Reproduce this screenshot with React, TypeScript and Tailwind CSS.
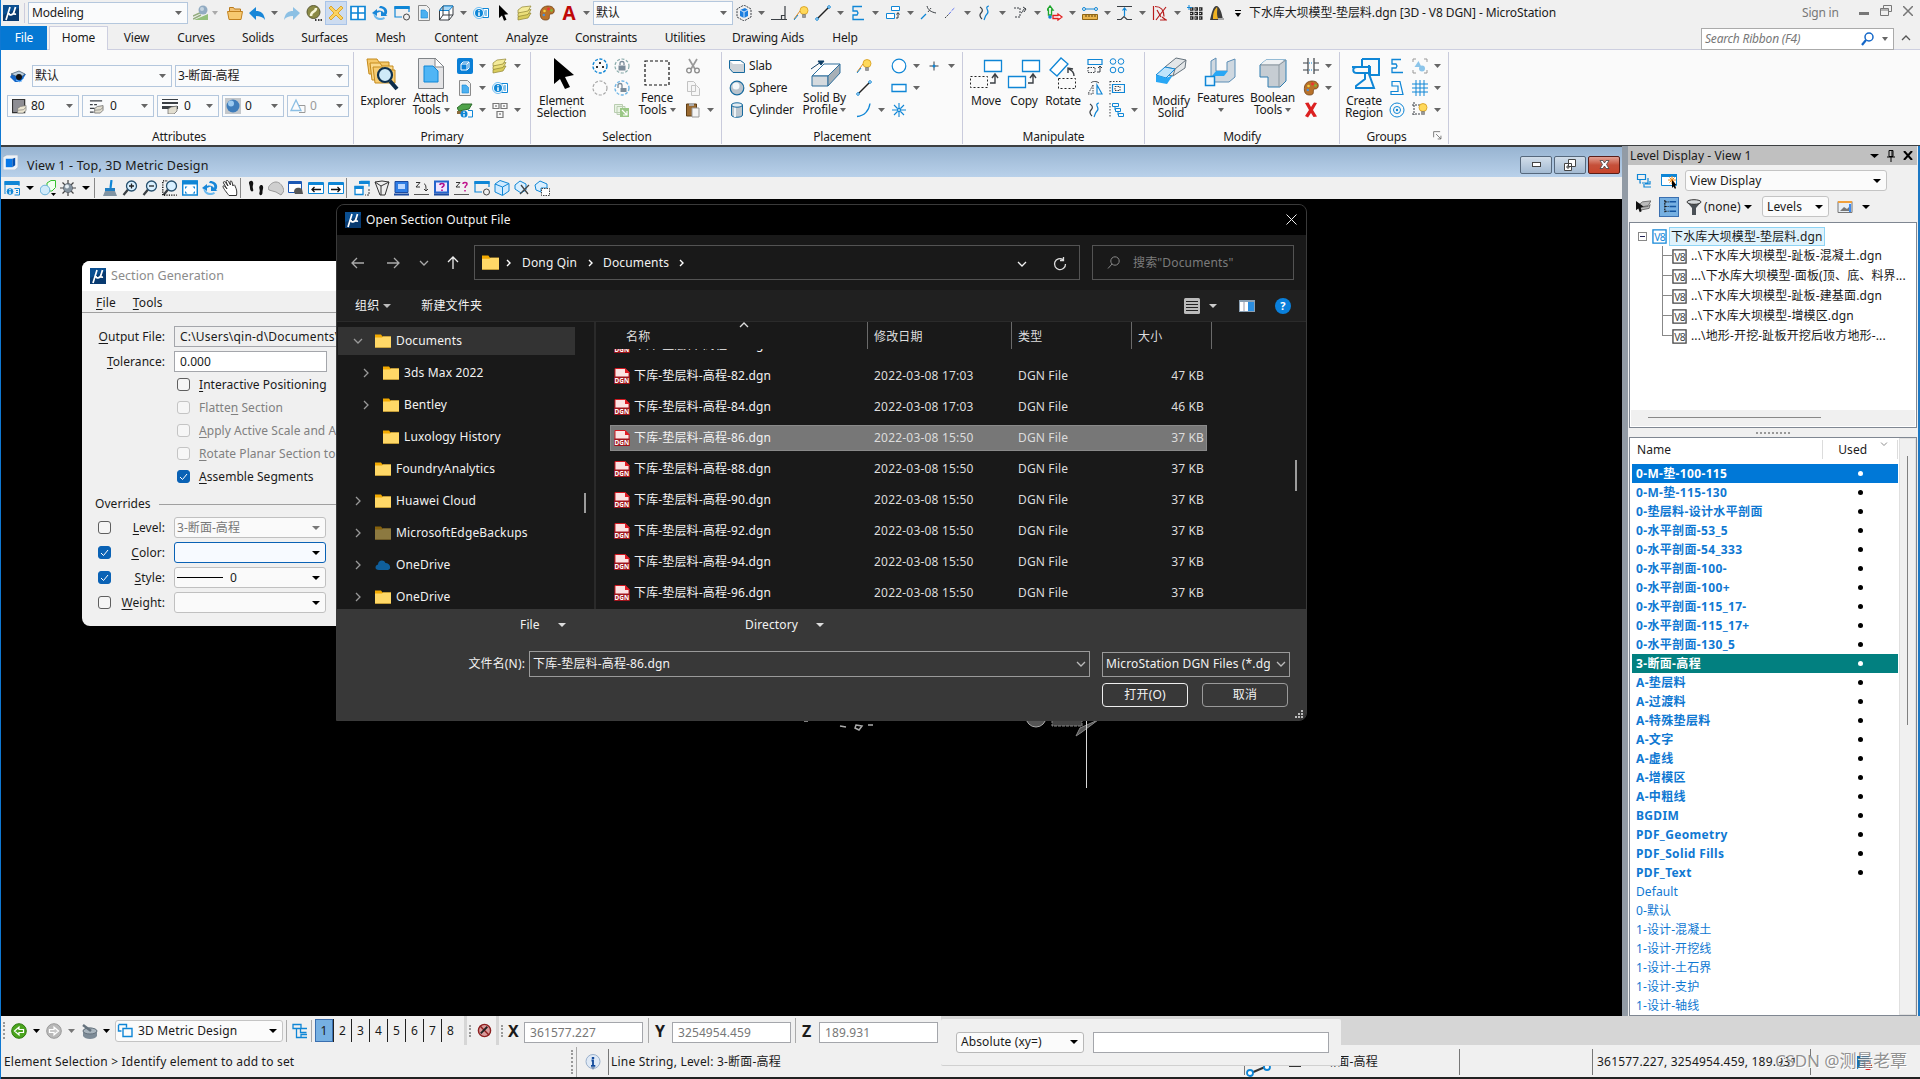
import { ReactNode } from "react";

const B = "#0f86d6";
const K = "#3a3f44";

const layers = (
  <>
    <path d="M1 12l4-3 9-1-3 5-10 2z" fill="#d9cc5c" stroke="#8f8430" strokeWidth=".7" />
    <path d="M1 8.500l4-3 9-1-3 5-10 2z" fill="#ebdf7a" stroke="#8f8430" strokeWidth=".7" />
    <path d="M1 5l4-3 9-1-3 5-10 2z" fill="#f4eb9a" stroke="#8f8430" strokeWidth=".7" />
  </>
);

const bulb = (
  <>
    <circle cx="11" cy="5.500" r="4" fill="#ffd95a" stroke="#d49a1a" strokeWidth=".8" />
    <path d="M9.500 9.500h3v3h-3z" fill="#999" stroke="#666" strokeWidth=".5" />
  </>
);

const lens = (
  <>
    <path d="M6 9.500L1.500 15" stroke={K} strokeWidth="2.200" />
    <circle cx="9.500" cy="6" r="5" fill="#d9f0ff" stroke="#27506e" strokeWidth="1.300" />
  </>
);

const v8 = (c: string) => (
  <>
    <path d="M1 1h14v14H1z" fill="#fff" stroke={c} strokeWidth="1.400" />
    <text x="8" y="12.500" fontSize="11" textAnchor="middle" fill={c} letterSpacing="-.8">V8</text>
  </>
);

const icons: Record<string, ReactNode> = {
  layers,
  // the file dialog's flat folder, the toolbar has a shaded open one
  folder: (
    <>
      <path d="M0 1.500h6l1.500 2H16v11H0z" fill="#f2a900" />
      <path d="M0 4.500h7l1-1h8v11H0z" fill="#ffd867" />
    </>
  ),
  openFolder: (
    <>
      <path d="M2.500 2.500h4l1 1.500h6v5h-11z" fill="#f3c272" stroke="#b97a1d" />
      <path d="M.5 6.500h15l-1.500 8H2z" fill="#f7c970" stroke="#c1811f" />
    </>
  ),
  infoCard: (
    <>
      <path d="M8 3.500h7.500v9H8" fill="#fff" stroke={B} />
      <path d="M12 6h2M12 8h2M12 10h2" stroke={B} />
      <circle cx="6" cy="8" r="5.500" fill="#fff" stroke="#6dbcf0" />
      <circle cx="6" cy="8" r="4" fill={B} />
      <path d="M6 5v1.300M6 7.200V11" stroke="#fff" strokeWidth="1.500" />
    </>
  ),
  palette: (
    <>
      <path d="M9 1c5 0 7 3 6 6s-4 1-4.500 3 1 5-4 5-5.500-4-5-8 4-6 7.500-6z" fill="#b9722a" stroke="#6e3d12" strokeWidth=".8" />
      <circle cx="9.500" cy="4" r="1.400" fill="#e33" />
      <circle cx="5.500" cy="6" r="1.300" fill="#f4d03f" />
      <circle cx="4.800" cy="10" r="1.300" fill="#4a90d9" />
      <circle cx="12.500" cy="5.500" r="1.200" fill="#7fba3c" />
    </>
  ),
  cursor: <path d="M4 0v13l3-2.600 2 5.300 2.500-1-2.200-5 4-.4z" fill="#000" />,
  page: (
    <>
      <path d="M2.500.5h8l3 3v12h-11z" fill="#f1f1f1" stroke="#8a8a8a" />
      <path d="M5 5h4l2.500 2.500V13H5z" fill="#4cb0f0" stroke={B} strokeWidth=".6" />
    </>
  ),
  wave: (
    <>
      <path d="M3 2c3 2 3 4 1 6s-1 4 1 6" stroke={K} strokeWidth="1.200" />
      <path d="M12 1c-1 0-3 1-2 3s2 3 0 5-2 4-3 6" stroke={B} strokeWidth="1.200" />
    </>
  ),
  chain: <path d="M12 1.500H3V6h4l1 2-1 2H3v4.500h11" stroke={B} strokeWidth="1.300" />,
  rectCopy: (
    <>
      <path d="M6.500 1.500h8v4h-8zM1.500 8.500h8v5h-8z" fill="#fff" stroke={B} />
      <path d="M11 13h2V8m-1.500 1.500L13 7.500l1.500 2" stroke={K} />
    </>
  ),
  stack: <path d="M1.500 1.500h8v5h-8zM4 7v3h1M12 5v5H6M8 11v3h7M14 8v3H9" stroke={B} strokeWidth="1.200" />,
  cube: (
    <>
      <path d="M6 .5l9 3v7.500L8.500 15.500 1 12V4z" fill="#cfeaff" stroke={B} />
      <path d="M1 4l7.500 3L15 3.500M8.500 7v8" stroke={B} />
    </>
  ),
  logo: (
    <>
      <path d="M0 0h16v16H0z" fill="#0b4f91" />
      <path d="M0 10L16 3v13H0z" fill="#083a70" />
      <path d="M3 15L7 2M6 8c0 3 4 2.500 5-1l1.500-5M11 7c-.5 2 0 2.500 2 2" stroke="#fff" strokeWidth="1.700" />
    </>
  ),
  workspace: (
    <>
      <path d="M1 15L15 9v6z" fill="#94c07c" />
      <path d="M0 11l11-5M0 14l8-4" stroke="#93ac7f" strokeWidth="1.400" />
      <circle cx="10" cy="5" r="4.500" fill="#92abc2" />
      <circle cx="9" cy="4" r="2" fill="#c5d4e0" />
    </>
  ),
  undo: <path d="M0 8l7-6v4c5 0 8 2 9 9-2-3-5-4-9-4v4z" fill="#1786d8" />,
  redo: <path d="M16 8L9 2v4c-5 0-8 2-9 9 2-3 5-4 9-4v4z" fill="#8cc0e4" />,
  compress: (
    <>
      <circle cx="7.500" cy="7" r="6.500" fill="#8b8a45" stroke="#5c5b34" />
      <path d="M5 11c0-6 5-3 5-8" stroke="#f7f6d8" strokeWidth="2.500" />
      <path d="M9 15h1.500M12 15h1.500M14.500 15H16" stroke="#000" strokeWidth="1.400" />
    </>
  ),
  xmark: <path d="M3 1l5 5 5-5 2 2-5 5 5 5-2 2-5-5-5 5-2-2 5-5-5-5z" fill="#fbd260" stroke="#d9a020" strokeWidth=".9" />,
  grid4: <path d="M1 1.500h14v13H1zM8 1v14M1 8h14" fill="#fff" stroke={B} strokeWidth="1.700" />,
  rotate: (
    <>
      <path d="M0 8l5-4v2c3-1 6 0 7 2 1-3-1-5-5-5l1-2c6 0 9 5 6 9l1.500 1H9V6l1.500 1.500C9 6 7 7 5 8v3z" fill="#1786d8" />
      <path d="M3 9c1 4 6 5 9 3l1 1.500C9 16.500 2 15 1.500 9z" fill="#6bb9ee" />
    </>
  ),
  viewCircle: (
    <>
      <path d="M15 7V2H1v10h7" stroke={B} strokeWidth="1.200" />
      <path d="M.4 1h15.200v3H.4z" fill={B} />
      <circle cx="12.500" cy="12" r="3" stroke="#444" />
    </>
  ),
  cubeDark: (
    <>
      <path d="M1.500 5.500L5 1h10v9l-4 5H1.500z" fill="#fff" stroke={K} />
      <path d="M1.500 5.500L5 1h10l-4 4.500z" fill="#aad9f7" stroke={B} />
      <path d="M11 5.500V15M5 1v9h10M5 10l-3.500 5" stroke={K} />
    </>
  ),
  letterA: <text x="8" y="15" fontSize="19" fontWeight="700" textAnchor="middle" fill="#c00808">A</text>,
  accuDraw: (
    <>
      <path d="M8 0l7 4v8l-7 4-7-4V4z" stroke={K} strokeDasharray="2 1" />
      <path d="M4 5l5-2 3 2v6l-4 2-4-2z" fill="#1c7fe0" />
      <path d="M4 5l4 2 4-2M8 7v6" stroke="#fff" strokeWidth=".8" />
    </>
  ),
  perp: <path d="M0 14.500h16M14 1v13M10.500 14v-3.500H14" stroke={K} strokeWidth="1.200" />,
  bulbArrow: <><path d="M1 14L7 6" stroke="#e08a1e" /><path d="M1 15l4-5" stroke={B} />{bulb}</>,
  line: (
    <>
      <path d="M2 14L14 2" stroke="#222" strokeWidth="1.400" />
      <circle cx="2" cy="14" r="1.300" fill="#fff" stroke={B} />
      <circle cx="14" cy="2" r="1.300" fill="#fff" stroke={B} />
    </>
  ),
  trim: (
    <>
      <path d="M7 1c1 4 4 6 9 7" stroke={K} />
      <path d="M6 9L1 14" stroke={B} strokeWidth="1.300" />
      <path d="M8 7l3-4" stroke={K} strokeDasharray="2 1.500" />
    </>
  ),
  extend: <><path d="M3 13l4-4" stroke={K} strokeDasharray="2 1" /><path d="M7 9l6-7" stroke="#5a6ff0" strokeDasharray="3 1.500" /></>,
  fillet: (
    <>
      <path d="M2 3h6v9H2" stroke={K} strokeDasharray="2 1" />
      <path d="M9 8c3-1 1-5 5-4M11 2l3 2-2 3" stroke={K} />
    </>
  ),
  acs: (
    <>
      <path d="M3 1l3 4H4.500v5h-3V5H0z" fill="#fff" stroke="#1fa62d" strokeWidth="1.400" />
      <path d="M15 12l-4-3v1.500H6v3h5V15z" fill="#fff" stroke="#e02020" strokeWidth="1.300" />
      <circle cx="3" cy="12" r="1.800" fill={B} />
    </>
  ),
  measure: (
    <>
      <circle cx="2" cy="4" r="1.500" stroke={B} /><circle cx="14" cy="4" r="1.500" stroke={B} />
      <path d="M3.500 4h9" stroke={B} />
      <path d="M.5 9.500h15v5H.5z" fill="#e9b44d" stroke="#8d6516" />
      <path d="M4 10v2M7 10v2M10 10v2M13 10v2" stroke="#5d4210" />
    </>
  ),
  dim: (
    <>
      <path d="M0 1.500h15M0 14.500h4l3-3 3 3h5" stroke={K} strokeWidth="1.200" />
      <path d="M7.500 11V3M5.500 5.500l2-2.500 2 2.500" stroke={B} strokeWidth="1.200" />
    </>
  ),
  angle: <path d="M1.500 1v14M4 15L14 2M3 1.500c6 0 9 4 9 10M5 5l4 7M8 15h7M10 12l4 3" stroke="#b81c1c" strokeWidth="1.200" />,
  dots: (
    <>
      <path d="M3 4h13M3 8.500h13M3 13h13" stroke="#222" strokeWidth="3.400" strokeDasharray="3.500 1" />
      <path d="M3.500 4h12M3.500 8.500h12M3.500 13h12" stroke="#ddd" strokeWidth="1" strokeDasharray="1.500 3" />
      <path d="M2 0v5M0 2.500h5" stroke={B} />
    </>
  ),
  bell: (
    <>
      <path d="M1 15C3 7 4 2 7 1s6 6 7 14z" fill="#3d3d3d" />
      <path d="M4 14c0-6 1-9 4-12 1 3-1 5 1 12z" fill="#f0b323" />
      <path d="M9 14h6" stroke="#aaa" strokeWidth="2" />
    </>
  ),
  template: (
    <>
      <path d="M0 9l2-3 14 0-5 8-6 0z" fill="#1667c8" />
      <path d="M1 6l8-3 6 3-5 4z" fill="#b9cddd" stroke="#36526a" strokeWidth=".7" />
      <circle cx="9" cy="9" r="3" fill="#111" />
      <path d="M6 12l4 2 4-4" stroke="#7cc2ff" />
    </>
  ),
  swatch: (
    <>
      <path d="M.5.5h13v14H.5z" fill="#8d8d93" stroke="#333" strokeWidth="1.300" />
      <path d="M6 10l3-2 6-1v5l-3 3H6z" fill="#ece6d2" stroke="#777" strokeWidth=".7" />
      <path d="M6 12l6-.5 3-2.500" stroke="#777" strokeWidth=".7" />
    </>
  ),
  lstyle: (
    <>
      <path d="M1 2h13M1 6h3M5.500 6h3M1 10h5M1 14h4" stroke={K} strokeWidth="1.200" />
      <path d="M6 10l3-2 6-1v5l-3 3H6z" fill="#e2ded0" stroke="#555" strokeWidth=".7" />
      <path d="M6 12l6-.5 3-2.500" stroke="#777" strokeWidth=".7" />
    </>
  ),
  lweight: (
    <>
      <path d="M0 1.500h16" stroke={K} /><path d="M0 5h16" stroke={K} strokeWidth="2" /><path d="M0 9.500h16" stroke={K} strokeWidth="3" />
      <path d="M6 11l3-2 6-1v5l-3 3H6z" fill="#e2ded0" stroke="#666" strokeWidth=".7" />
    </>
  ),
  globe: <><path d="M0 0h16v16H0z" fill="#c3c7cb" /><circle cx="8" cy="8" r="6.500" fill="#3f7dbb" /><circle cx="6" cy="5.500" r="3" fill="#9ccaf0" /></>,
  priority: <><path d="M1 12.500L6 2l5 10.500z" stroke="#8cbfe4" strokeWidth="1.300" /><path d="M9 7.500h6v7H9" stroke="#9a9a9a" /></>,
  models: <><rect width="16" height="16" rx="2" fill="#0a7fd6" /><path d="M4 6l2-2h6v6l-2 2H4zM4 6h6v6M10 6l2-2" stroke="#fff" /></>,
  refLayers: <><path d="M0 6l5-4h10l-3 5-10 2z" fill="#4fa34a" stroke="#2c6b2a" /><path d="M0 9h6v3H0z" fill="#8b6b3d" /><circle cx="7" cy="12" r="3.500" fill={B} /><path d="M11 8.500h4.500v6.500H11M7 10v1M7 12v2.500" stroke={B} /><path d="M7 9.500V11M7 12v2.500" stroke="#fff" strokeWidth="1.300" /></>,
  keyins: <path d="M1 1.500h6v5H1zM9 1.500h6v5H9zM5 9.500h6v6H5zM4 3v2M12 3v2M8 11v2" stroke="#777" strokeWidth="1.200" />,
  selAll: <><circle cx="8" cy="8" r="7" stroke={B} strokeWidth="1.400" strokeDasharray="3 1.600" /><path d="M7 4h2v2H7zM4 8h2v2H4zM10 8h2v2h-2z" fill="#333" /></>,
  selLock: <><circle cx="8" cy="8" r="7" stroke="#8aa" strokeWidth="1.200" strokeDasharray="3 1.600" /><path d="M4.500 7.500h7v5h-7z" fill="#7a8b99" /><path d="M6 7V5c0-2 4-2 4 0v2" stroke="#7a8b99" strokeWidth="1.300" /></>,
  selNone: <circle cx="8" cy="8" r="7" stroke="#a8a8a8" strokeWidth="1.200" strokeDasharray="3 1.600" />,
  selUnlock: <><circle cx="8" cy="8" r="7" stroke="#6fb6e6" strokeWidth="1.400" strokeDasharray="3 1.600" /><path d="M6.500 8h6v4h-6z" fill="#7a8b99" /><path d="M4 8V5c0-2 4-2 4 0v3" stroke="#7a8b99" strokeWidth="1.300" /></>,
  greenCopy: <><path d="M.5 2.500h8v8h-8zM3 4.500h8v8H3z" fill="#e9f3e4" stroke="#b9cdb0" /><path d="M6 6h9v9H6z" fill="#9ac785" /><path d="M8 8l5 5M13 9v4H9" stroke="#fff" strokeWidth="1.200" /></>,
  cut: <><path d="M4 1l6 10M12 1L6 11" stroke="#9a9a9a" strokeWidth="1.700" /><circle cx="4" cy="12.500" r="2.300" stroke="#8a8a8a" strokeWidth="1.300" /><circle cx="12" cy="12.500" r="2.300" stroke="#8a8a8a" strokeWidth="1.300" /></>,
  copy: <path d="M2.500 1.500h6l2 2v8h-8zM6.500 5.500h5l3 3v7h-8z" fill="#f6f6f6" stroke="#c2c2c2" />,
  paste: <><path d="M1.500 2h10v12h-10z" fill="#9a6a31" stroke="#5d3c14" /><path d="M4 1h5v3H4z" fill="#aaa" /><path d="M7 6h7v9H7z" fill="#f4f4f4" stroke="#999" /></>,
  slab: <><path d="M.5 2.500h11l4 3v9H4l-3.500-4z" fill="#cdd3d8" stroke="#176a9e" /><path d="M1 3h10l4 3H4z" fill="#fff" /></>,
  sphere: <><circle cx="8" cy="8" r="6.800" fill="#b9c3cc" stroke="#176a9e" strokeWidth="1.200" /><circle cx="7" cy="6" r="3.500" fill="#f3f7fa" /></>,
  cylinder: <><path d="M2.500 3v10c0 3 11 3 11 0V3z" fill="#bcc6ce" stroke="#176a9e" /><path d="M6 5v10" stroke="#eef3f6" strokeWidth="2" /><ellipse cx="8" cy="3" rx="5.500" ry="2.200" fill="#e4ecf1" stroke="#176a9e" /></>,
  arc: <path d="M1 14.500C8 14 13 9 14 1.500" stroke={B} strokeWidth="1.300" />,
  circle: <circle cx="8" cy="8" r="6.800" fill="#fff" stroke={B} strokeWidth="1.200" />,
  rect: <path d="M1 4.500h14v7H1z" fill="#fff" stroke={B} strokeWidth="1.300" />,
  star: <path d="M8 1v5M8 10v5M1 8h5M10 8h5M3 3l3.500 3.500M13 13L9.500 9.500M13 3L9.500 6.500M3 13l3.500-3.500M8 6l2 2-2 2-2-2z" stroke={B} strokeWidth="1.100" />,
  plus: <><path d="M8 3.500v9M3.500 8h9" stroke={K} /><circle cx="8" cy="8" r="1.500" fill={B} /></>,
  stretch: <><path d="M1 1.500h14v5H1z" stroke={B} strokeWidth="1.200" /><path d="M1 9.500h7v5H1z" stroke={K} strokeDasharray="1.500 1" /><path d="M10 14h3V8M11 10l2-2 2 2" stroke={K} /></>,
  array: <><circle cx="4" cy="3.500" r="2.800" stroke={B} /><circle cx="12" cy="3.500" r="2.800" stroke={B} /><circle cx="4" cy="12" r="2.800" stroke={B} /><circle cx="12" cy="12" r="2.800" stroke={B} /></>,
  mirror: <><path d="M6 5v9H1z" stroke={K} strokeDasharray="1.500 1" /><path d="M10 5v9h5z" stroke={B} strokeWidth="1.200" /><path d="M4 3c1-2 6-2 8 0" stroke={K} /></>,
  scale: <><path d="M1 1v14M1 1.500h12" stroke={K} strokeDasharray="1.500 1.500" /><path d="M3.500 4.500h12v8h-12z" stroke={B} strokeWidth="1.200" /><path d="M6 6.500h5v4H6z" stroke={K} strokeDasharray="1.500 1" /></>,
  align: <><path d="M1 1v14" stroke={K} strokeDasharray="1.500 1.500" /><path d="M3.500 1.500h6v3h-6zM6.500 6.500h5v3h-5zM9.500 11.500h5v3h-5zM6 5v3M9 10v3" stroke={B} /></>,
  hashBlack: <><path d="M5 0v16M11 0v16M0 5h5M11 5h5M0 12h5M11 12h5" stroke={K} strokeWidth="1.200" /><path d="M6 5h4M6 12h4" stroke={B} strokeDasharray="1 1" /></>,
  redX: <path d="M2 1l3.500-.5L8 5l3-4.500L14 1l-4 7 4 6.500-3.500.5L8 11l-3 4.500L2 14l4-6z" fill="#dc2020" />,
  chain2: <path d="M3 1.500h8l3 13H2v-3h7V6H3z" stroke={B} strokeWidth="1.200" />,
  target: <><circle cx="8" cy="8" r="7" stroke={B} /><circle cx="8" cy="8" r="3.500" stroke={B} /><circle cx="8" cy="8" r="1.200" fill={B} /></>,
  pattern: <><path d="M1 4V1h3M12 1h3v3M15 12v3h-3M4 15H1v-3" stroke="#999" /><path d="M2.500 9l4-6 3 6z" fill="#8cc5ea" /><circle cx="10" cy="10.500" r="3" fill="#8cc5ea" /></>,
  hash: <path d="M4 0v16M8 0v16M12 0v16M0 4h16M0 8h16M0 12h16" stroke={B} />,
  bulbHash: <><path d="M2 0v13M0 3h10M0 12h8" stroke={K} strokeDasharray="2 1" />{bulb}</>,
  launcher: <path d="M2 9V2h8M5 5l6 6M11 7v4H7" stroke="#666" />,
  viewCube: <><path d="M0 2l4-2h12v13l-3 3H0z" fill="#eef3f8" stroke="#9ab" strokeWidth=".6" /><path d="M3 4h7v9H3z" fill="#0878e8" /><path d="M10 4l3-1v8l-3 2z" fill="#034fb0" /></>,
  attrs: <><path d="M1 14V1.500h14V6" stroke={B} /><path d="M.5 1h15v4H.5z" fill={B} /><circle cx="6" cy="11.500" r="3.800" fill={B} stroke="#fff" strokeWidth=".8" /><path d="M6 9v1.300M6 11.200v2.800" stroke="#fff" strokeWidth="1.300" /><path d="M10.500 8.500h5v6.500h-5M12 10.500h2M12 12.500h2" stroke={B} /></>,
  style: <><path d="M7 3l4-2.500h4.500v7L12 11H7z" fill="#f1fff0" stroke="#35c02e" /><circle cx="5" cy="10" r="4.800" fill="#d0eafa" stroke="#6cb2da" /><path d="M11 13h5l-2.500 3z" fill="#000" /></>,
  sun: <><path d="M8 0v16M0 8h16M2.500 2.500l11 11M13.500 2.500l-11 11" stroke="#444" strokeWidth="1.200" /><circle cx="8" cy="8" r="4.600" fill="#84929e" stroke="#4b545c" strokeWidth=".6" /><circle cx="7" cy="6.500" r="2" fill="#e6eef4" /></>,
  brush: <><path d="M9.500 0l-1 8" stroke={B} strokeWidth="2.200" /><path d="M3 8h10v3H3z" fill="#1f7fc4" /><path d="M3 11h10l2 5H1z" fill="#8194a3" /></>,
  zoomIn: <>{lens}<path d="M7 6h5M9.500 3.500v5" stroke="#222" strokeWidth="1.300" /></>,
  zoomOut: <>{lens}<path d="M7 6h5" stroke="#222" strokeWidth="1.300" /></>,
  zoomWin: <>{lens}<path d="M1 .8h5M.8 2v13.200h14" stroke="#000" strokeWidth="1.300" strokeDasharray="1.200 1.200" /></>,
  fit: <><path d="M.7 1h14.600v14H.7z" fill="#fff" stroke={B} strokeWidth="1.500" /><path d="M.5.5h15v4H.5z" fill={B} /><path d="M3 6.500h2.500L3 9zM13 6.500h-2.500L13 9zM3 13.500h2.500L3 11zM13 13.500h-2.500L13 11z" fill={B} /></>,
  hand: <path d="M7 15.500C5 13 1 8 1 6.500S3 6 5 9L1.500 3c-.5-1.500 1-2 2-.5L6 6 4 1.500C4 0 6 .2 6.500 1.500L8.500 5 8 2c0-1.500 1.800-1.300 2 0l1 4c.5-2 2-1 2 0 2 4 2 6 1.500 9.500z" fill="#fff" stroke="#333" />,
  feet: <><path d="M1.500 1.500C4-.5 6 2 5 5s1 5 0 6-3 0-3-3-2-5-.5-6.500z" fill="#111" /><path d="M14.500 5.500c-2-1.500-4 1-3 3.500s-1 4 0 5.500 3 .5 3-2 1.500-5.500 0-7z" fill="#111" /></>,
  fly: <path d="M0 8c2-4 5-6 8-6 4 0 7 4 8 9l-3 4-5-3-7-2z" fill="#cfcfcf" stroke="#999" />,
  navi: <><path d="M.5 1.500h13v11H.5z" fill="#fff" stroke="#1b58b5" /><path d="M1 1h12v3H1z" fill="#1b58b5" /><path d="M6 12c0-5 5-5 8-3l1 5H7z" fill="#555" /></>,
  prev: <><path d="M.5 2.500h15v11H.5z" fill="#fff" stroke={B} /><path d="M1 2h14v3H1z" fill={B} /><path d="M13 9.500H4M6.500 7L4 9.500 6.500 12" stroke="#111" strokeWidth="1.300" /></>,
  next: <><path d="M.5 2.500h15v11H.5z" fill="#fff" stroke={B} /><path d="M1 2h14v3H1z" fill={B} /><path d="M3 9.500h9M9.500 7L12 9.500 9.500 12" stroke="#111" strokeWidth="1.300" /></>,
  copyView: <><path d="M6.500 1.500h8.500v5M1 6.500h8v8H1z" fill="#fff" stroke={B} strokeWidth="1.300" /><path d="M5 1h10.500v3H5zM.5 6h9v3h-9z" fill={B} /><path d="M15 9v6h-4" stroke={K} strokeDasharray="2 1" /></>,
  camera: <><path d="M1 2l7-1 7 1-4 13H6z" fill="#eee" stroke="#333" /><path d="M1 2l6 4 8-4M7 6v9" stroke="#333" /></>,
  monitor: <><path d="M1 1.500h13v11H1z" fill="#2f7de4" stroke="#1a4aa0" /><path d="M4 4h7v5H4z" fill="#bcd8ff" /><path d="M0 14.500h15" stroke="#1a4aa0" strokeWidth="2" /></>,
  monitorQ: <><path d="M1 1.500h13v11H1z" fill="#efe4ff" stroke="#2464cc" strokeWidth="2" /><path d="M6 5c0-2 4-2 4 0S8 6 8 8M8 9.500v1.500" stroke="#b0108c" strokeWidth="1.600" /><path d="M0 14.500h15" stroke="#1a4aa0" strokeWidth="2" /></>,
  zDown: <><path d="M2 2.500h4L2 7h4M10 4c2 0 2 3 2 7M10 9l2 2 2-2" stroke="#333" /><path d="M0 14.500h15" stroke="#555" /></>,
  zQ: <><path d="M2 2.500h4L2 7h4" stroke="#333" /><path d="M9 4c0-2 4-2 4 0s-2 1-2 4M11 10v1.500" stroke="#c0148c" strokeWidth="1.500" /><path d="M0 14.500h15" stroke="#555" /></>,
  clip: <><path d="M1 5l5-4 6 3v6l-5 3-6-4z" fill="#d9efff" stroke={B} /><path d="M6 14l9-9M7 5l7 9" stroke="#444" strokeWidth="1.300" /></>,
  clipMask: <><path d="M1 5l5-4 7 3v4H7v4l-5-2z" fill="#d9efff" stroke={B} /><path d="M7.500 8.500h8v7h-8z" fill="#fff" stroke="#444" strokeDasharray="1.500 1" /></>,
  viewStar: <><path d="M.5 1.500h15v11H.5z" fill="#fff" stroke={B} /><path d="M0 1h16v3H0z" fill={B} /><path d="M11 3v8M7 7h8M8.500 4.500l5 5M13.500 4.500l-5 5" stroke="#f08a18" /><path d="M11 7v8l1.500-1.500L14 16l1-1-1-3h1.500z" fill="#000" /></>,
  grayLayers: <><path d="M3 6l4-3 9-1-3 5-9 2zM3 9l10-1 2-2-1 4-10 2z" fill="#bbb" stroke="#444" strokeWidth=".7" /><path d="M0 2l8 6-3 1 1 4-2 1-1.500-4L0 12z" fill="#111" /></>,
  treeIcon: <><path d="M3 1v13M3 3h4M3 8h4M3 13h4" stroke="#111" strokeWidth="1.200" strokeDasharray="2 1" /><path d="M8 3h7M8 8h7M8 13h7" stroke="#1455a0" strokeWidth="1.700" /></>,
  funnel: <><path d="M1 3l5 6v7h4V9l5-6z" fill="#4a5056" /><ellipse cx="8" cy="3" rx="7" ry="2.300" fill="#d5d9dc" stroke="#333" /></>,
  picture: <><path d="M1 2.500h14v11H1z" fill="#e8eef4" stroke="#777" /><path d="M1 2h14v2H1z" fill="#f0a03c" /><path d="M3 12l4-4 3 2 4-4v6z" fill="#777" /><path d="M12 5h2v8h-2z" fill="#3b8af0" /></>,
  v8blue: v8("#1487d8"),
  v8dark: v8("#444"),
  dgn: (
    <>
      <path d="M1 .5h10l4 4V16H1z" fill="#fbe3e3" stroke="#d01820" />
      <path d="M11 0v5h5z" fill="#e01b24" />
      <path d="M.5 8.500h15V16H.5z" fill="#a0141c" />
      <text x="8" y="14.800" fontSize="6.400" fontWeight="700" textAnchor="middle" fill="#fff">DGN</text>
    </>
  ),
  cloud: <path d="M4 13c-5 0-4-5-1-5.500C3 3 9 2 10.500 6 15 5.500 17 12 13 13z" fill="#0f5f9c" />,
  backGreen: <><circle cx="8" cy="8" r="7.300" fill="#4ba51e" stroke="#2d7a0d" /><path d="M3.500 8L8 4v2.500h4.500v3H8V12z" fill="#4ba51e" stroke="#fff" strokeWidth="1.200" /></>,
  fwdGray: <><circle cx="8" cy="8" r="7.300" fill="#b9b9b9" stroke="#999" /><path d="M12.500 8L8 4v2.500H3.500v3H8V12z" fill="#c8c8c8" stroke="#fff" strokeWidth="1.200" /></>,
  disk: <><path d="M1 7c3-4 12-3 14 1v5c-2 4-12 4-14 0z" fill="#7d8b97" /><ellipse cx="8" cy="8" rx="7" ry="3" fill="#a8b4bd" stroke="#66737e" /><path d="M1 2l8 6" stroke="#66737e" strokeWidth="2.500" /></>,
  views: <path d="M1.500 1.500h8v3M1.500 2v6h3M6 5.500h9v8H6z" stroke={B} strokeWidth="1.400" />,
  cascade: <path d="M1 1.500h8v4H1zM4.500 6v8.500h4M15 5.500H8.500v4h6M15 11.500H9v3h6" stroke={B} strokeWidth="1.300" />,
  noSnap: <><circle cx="8" cy="8" r="6.500" fill="#d99b9b" stroke="#8d1f1f" strokeWidth="1.500" /><path d="M3 3l10 10" stroke="#8d1f1f" strokeWidth="1.500" /><path d="M4 11l7-7" stroke="#222" strokeWidth="2" /></>,
  info: <><circle cx="8" cy="7.500" r="7" fill="#dfe9f5" stroke="#9ab0cc" /><path d="M6 13h4l-2 3z" fill="#7d93b4" /><path d="M8 3v2" stroke="#124a9c" strokeWidth="2.400" /><path d="M6.500 6.500H8v5M6 11.800h4.300" stroke="#124a9c" strokeWidth="1.800" /></>,
  book: <><path d="M1 2h12v13H1z" fill="#1471b8" /><path d="M4 2v13" stroke="#0c4c80" /><circle cx="12" cy="12" r="3.500" fill="#fff" stroke="#e02020" strokeWidth="1.300" /><path d="M9.700 9.700l4.600 4.600" stroke="#e02020" /></>,
};

function Icon({ n, s = 16, className = "" }: { n: string; s?: number; className?: string }) {
  return (
    <svg width={s} height={s} viewBox="0 0 16 16" fill="none" className={`shrink-0 ${className}`}>
      {icons[n]}
    </svg>
  );
}

function Tri({ className = "text-[#666]", w = 7 }: { className?: string; w?: number }) {
  return (
    <svg width={w} height={4} viewBox="0 0 8 4" preserveAspectRatio="none" className={`shrink-0 ${className}`}>
      <path d="M0 0h8L4 4z" fill="currentColor" />
    </svg>
  );
}

function Chev({ d = "M1 3l4 4 4-4", className = "" }: { d?: string; className?: string }) {
  return (
    <svg width={10} height={10} viewBox="0 0 10 10" fill="none" className={`shrink-0 ${className}`}>
      <path d={d} stroke="currentColor" strokeWidth="1.300" />
    </svg>
  );
}

// "v" is the drop-down arrow, every other name is an icon
function Tools({ items }: { items: string[] }) {
  return (
    <>
      {items.map((n, i) =>
        n === "v" ? (
          <span key={i} className="flex w-[13px] shrink-0 justify-center"><Tri /></span>
        ) : (
          <span key={i} className="flex w-[22px] shrink-0 justify-center"><Icon n={n} /></span>
        )
      )}
    </>
  );
}

function Rows({ rows, className = "" }: { rows: string[][]; className?: string }) {
  return (
    <div className={`flex shrink-0 flex-col pt-[5px] ${className}`}>
      {rows.map((r, i) => <div key={i} className="flex h-[22px] items-center"><Tools items={r} /></div>)}
    </div>
  );
}

function Combo({ children, className = "" }: { children?: ReactNode; className?: string }) {
  return (
    <div className={`flex shrink-0 items-center justify-between border border-[#b4c7dd] bg-[#fafbfc] pr-[5px] ${className}`}>
      <span className="flex items-center gap-[4px] whitespace-nowrap">{children}</span>
      <Tri />
    </div>
  );
}

function Group({ label, className, children }: { label: string; className: string; children: ReactNode }) {
  return (
    <div className={`relative mt-[2px] flex h-[92px] shrink-0 flex-col border-r border-[#c9cbdc] ${className}`}>
      <div className="-mt-[2px] flex h-[79px] shrink-0">{children}</div>
      <div className="text-center leading-[15px]">{label}</div>
    </div>
  );
}

function Big({ art, lines, drop, className }: { art: ReactNode; lines: string[]; drop?: boolean; className: string }) {
  return (
    <div className={`flex shrink-0 flex-col items-center leading-[12px] whitespace-nowrap ${className}`}>
      <svg width={34} height={34} viewBox="0 0 34 34" fill="none" className={drop ? "mt-[7px] mb-[1px]" : "mt-[7px] mb-[4px]"}>{art}</svg>
      {lines.map((l, i) => (
        <span key={l} className="flex h-[12px] items-center gap-[3px]">{l}{drop && i === 1 ? <Tri w={6} /> : null}</span>
      ))}
      {drop && lines.length === 1 ? <span className="pt-[4px]"><Tri w={6} /></span> : null}
    </div>
  );
}

const art = {
  explorer: (
    <>
      <path d="M1 2h10l2 3h10v12H3z" fill="#f5c869" stroke="#c48a1c" />
      <path d="M4 6h10l2 3h11v14H6z" fill="#fbd98c" stroke="#c48a1c" />
      <path d="M7 10h9l2 3h11v13H9z" fill="#f7cc72" stroke="#c48a1c" />
      <path d="M24 24l7 8" stroke="#0d2c4a" strokeWidth="4" />
      <circle cx="19" cy="18" r="7" fill="#cfeaf8" stroke="#0d3050" strokeWidth="2.200" />
    </>
  ),
  attach: (
    <>
      <path d="M4.500 1.500h17l8 8v22h-25z" fill="#e4e4e6" stroke="#808488" />
      <path d="M21 1v9h9z" fill="#fff" stroke="#808488" />
      <path d="M10 9h9l5 5v11H10z" fill="#4fb5f5" stroke={B} />
    </>
  ),
  element: <path d="M9 1v26l6-5 5 10 5-2-5-10 9-2z" fill="#000" />,
  fence: <path d="M5 4h24v24H5z" stroke="#111" strokeWidth="1.200" strokeDasharray="3 2" />,
  solid: (
    <>
      <path d="M4 19L16 7h16L20 19z" fill="#fff" stroke="#2e6f9c" />
      <path d="M4 19h16v10H4z" fill="#d5dade" stroke="#2e6f9c" />
      <path d="M20 19L32 7v9L20 29z" fill="#a7b0b7" stroke="#2e6f9c" />
      <path d="M3 12L13 5M10 4h6l-3 4z" stroke="#0f3f66" fill="#0f3f66" />
    </>
  ),
  move: (
    <>
      <path d="M15.500 3.500h17v11h-17z" fill="#fff" stroke={B} strokeWidth="1.300" />
      <path d="M1.500 19.500h17v11h-17z" stroke="#222" strokeDasharray="2 2" />
      <path d="M21 26h5v-8M23 21l3-4 3 4" stroke={K} strokeWidth="1.400" />
    </>
  ),
  copy: (
    <>
      <path d="M15.500 3.500h17v11h-17zM1.500 19.500h17v11h-17z" fill="#fff" stroke={B} strokeWidth="1.300" />
      <path d="M21 26h5v-8M23 21l3-4 3 4" stroke={K} strokeWidth="1.400" />
    </>
  ),
  rotate: (
    <>
      <path d="M4 13L15 1l7 6-11 12z" fill="#fff" stroke={B} strokeWidth="1.300" />
      <path d="M12.500 21.500h17v10h-17z" stroke="#222" strokeDasharray="2 2" />
      <path d="M28 19c0-4-2-5-5-7M22 16v-5l5 1" stroke={K} strokeWidth="1.400" />
    </>
  ),
  modify: (
    <>
      <path d="M11 10L22 1l10 2-1 8-12 8-9-2z" fill="#e3e6e8" stroke="#66737d" />
      <path d="M11 10l10 2 11-9M21 12l-2 7" stroke="#66737d" />
      <path d="M2 18l9-8 10 2-9 9z" fill="#bfe4fb" stroke={B} />
      <path d="M2 18l10 3 7-3-6 9-11-2z" fill="#29a7f5" />
    </>
  ),
  features: (
    <>
      <path d="M7 4l5-3v13h11V5l8-3v18l-6 5H7z" fill="#cfd8e0" stroke="#5b8db5" />
      <path d="M12 14h12l-4 5H8z" fill="#29a7f5" />
      <path d="M1.500 19.500h9v9h-9z" fill="#eef8ff" stroke={B} strokeWidth="1.500" />
    </>
  ),
  boolean: (
    <>
      <path d="M4 8l6-5h20v21l-6 6H12V20H4z" fill="#c6cdd3" stroke="#2e7db0" />
      <path d="M4 8h19v22M23 8l7-5" stroke="#8b979f" />
      <path d="M5 7l5-4h18l-5 4z" fill="#eef1f3" />
    </>
  ),
  region: <path d="M15 2h17v16H23M5 10h18v6H10c-5 0-5-6 0-6M15 2v8M18 16v6l-9 7v2h18l-5-14V8" stroke={B} strokeWidth="2" />,
};

const tabs: [string, string][] = [
  ["View", "w-[57px]"], ["Curves", "w-[62px]"], ["Solids", "w-[62px]"], ["Surfaces", "w-[71px]"], ["Mesh", "w-[61px]"],
  ["Content", "w-[70px]"], ["Analyze", "w-[72px]"], ["Constraints", "w-[86px]"], ["Utilities", "w-[72px]"], ["Drawing Aids", "w-[94px]"], ["Help", "w-[60px]"],
];

function TitleBar() {
  return (
    <div className="flex h-[26px] shrink-0 items-center bg-[#f0f0f0]">
      <Icon n="logo" className="ml-[2px]" />
      <div className="ml-[5px] h-[20px] w-px bg-[#ccd]" />
      <Combo className="ml-[3px] h-[22px] w-[160px] pl-[3px]">Modeling</Combo>
      <div className="ml-[2px] flex items-center">
        <Tools items={["workspace"]} />
        <span className="w-[9px]"><Tri className="text-[#aaa]" w={6} /></span>
        <span className="ml-[3px] flex items-center"><Tools items={["openFolder", "undo", "v", "redo", "compress"]} /></span>
        <span className="flex h-[24px] items-center border border-[#a9c4e8] bg-[#cddcf0]"><Icon n="xmark" className="mx-[2px]" /></span>
        <Tools items={["grid4", "rotate", "viewCircle", "page", "cubeDark", "v", "infoCard", "cursor", "layers", "palette", "letterA", "v"]} />
      </div>
      <Combo className="h-[24px] w-[140px] pl-[2px]">默认</Combo>
      <Tools items={["accuDraw", "v", "perp", "bulbArrow", "line", "v", "chain", "v", "rectCopy", "v", "trim", "extend", "v", "wave", "v", "fillet", "v", "acs", "v", "measure", "v", "dim", "v", "angle", "v", "dots", "bell"]} />
      <span className="mr-[8px] ml-[6px] flex w-[7px] flex-col items-center gap-[2px]"><i className="h-px w-[6px] bg-black" /><Tri className="text-black" w={6} /></span>
      <span className="w-[553px] tracking-[-0.1px] whitespace-nowrap">下水库大坝模型-垫层料.dgn [3D - V8 DGN] - MicroStation</span>
      <span className="w-[57px] whitespace-nowrap text-[#777]">Sign in</span>
      <span className="h-[3px] w-[10px] bg-[#777]" />
      <svg width={12} height={12} viewBox="0 0 12 12" fill="none" stroke="#777" className="-mt-[4px] ml-[11px]"><path d="M3.500 3V.5h8v6H9M.5 3.500h8v7h-8zM.5 5h8" /></svg>
      <svg width={10} height={10} viewBox="0 0 10 10" stroke="#777" strokeWidth="1.500" className="-mt-[4px] ml-[11px]"><path d="M0 0l10 10M10 0L0 10" /></svg>
    </div>
  );
}

function TabBar() {
  return (
    <div className="flex h-[24px] shrink-0 border-b border-[#cdcfe0] bg-[#f0f0f0] text-center leading-[23px]">
      <div className="h-[24px] w-[46px] bg-[#0578d3] text-white">File</div>
      <div className="ml-[2px] h-[24px] w-[59px] border border-b-0 border-[#cdcfe0] bg-[#fafafa] leading-[21px]">Home</div>
      {tabs.map(([t, w]) => <div key={t} className={`shrink-0 whitespace-nowrap ${w}`}>{t}</div>)}
      <div className="ml-auto flex items-center">
        <div className="mt-[2px] flex h-[22px] w-[193px] items-center border border-[#aaa] bg-white pr-[5px] pl-[3px]">
          <span className="flex-1 text-left text-[#777] italic">Search Ribbon (F4)</span>
          <svg width={13} height={14} viewBox="0 0 13 14" fill="none" stroke="#1467c8"><circle cx="8" cy="5" r="4" strokeWidth="1.500" /><path d="M5 8l-4 5" strokeWidth="2.200" /></svg>
          <Tri className="ml-[8px] text-[#666]" w={6} />
        </div>
        <Chev d="M1 7l4-4 4 4" className="mr-[9px] ml-[7px] text-[#555]" />
      </div>
    </div>
  );
}

function Ribbon() {
  return (
    <div className="flex h-[97px] shrink-0 overflow-hidden border-b-2 border-[#3c3f41] bg-[#fafafa]">
      <Group label="Attributes" className="w-[353px] pr-[2px] [&>div:last-child]:pl-[6px]">
        <div className="flex flex-col gap-[8px] pt-[15px] pl-[6px]">
          <div className="flex items-center">
            <Icon n="template" className="mr-[6px] ml-[3px]" />
            <Combo className="h-[22px] w-[140px] pl-[2px]">默认</Combo>
            <Combo className="ml-[3px] h-[22px] w-[174px] pl-[2px]">3-断面-高程</Combo>
          </div>
          <div className="flex gap-[3px]">
            <Combo className="h-[22px] w-[72px] pl-[4px]"><Icon n="swatch" s={15} />80</Combo>
            <Combo className="h-[22px] w-[72px] pl-[6px]"><Icon n="lstyle" s={15} /><span className="ml-[2px]">0</span></Combo>
            <Combo className="h-[22px] w-[62px] pl-[4px]"><Icon n="lweight" /><span className="ml-[2px]">0</span></Combo>
            <Combo className="h-[22px] w-[62px] pl-[2px]"><Icon n="globe" />0</Combo>
            <Combo className="h-[22px] w-[62px] pl-[2px] text-[#999]"><Icon n="priority" />0</Combo>
          </div>
        </div>
      </Group>
      <Group label="Primary" className="w-[177px]">
        <Big art={art.explorer} lines={["Explorer"]} className="w-[58px]" />
        <Big art={art.attach} lines={["Attach", "Tools"]} drop className="w-[38px]" />
        <Rows className="ml-[4px]" rows={[["models", "v"], ["page", "v"], ["refLayers", "v"]]} />
        <Rows rows={[["layers", "v"], ["infoCard"], ["keyins", "v"]]} />
      </Group>
      <Group label="Selection" className="w-[191px] [&>div:last-child]:pl-[2px]">
        <Big art={art.element} lines={["Element", "Selection"]} className="ml-[1px] w-[59px]" />
        <Rows className="-ml-[2px]" rows={[["selAll"], ["selNone"]]} />
        <Rows rows={[["selLock"], ["selUnlock"], ["greenCopy"]]} />
        <Big art={art.fence} lines={["Fence", "Tools"]} drop className="w-[48px]" />
        <Rows className="ml-[1px]" rows={[["cut"], ["copy"], ["paste", "v"]]} />
      </Group>
      <Group label="Placement" className="w-[241px]">
        <div className="w-[78px] shrink-0 pt-[5px] pl-[7px]">
          {["Slab", "Sphere", "Cylinder"].map((t) => (
            <div key={t} className="flex h-[22px] items-center gap-[4px]"><Icon n={t.toLowerCase()} />{t}</div>
          ))}
        </div>
        <Big art={art.solid} lines={["Solid By", "Profile"]} drop className="w-[49px]" />
        <Rows className="ml-[4px]" rows={[["bulbArrow"], ["line"], ["arc", "v"]]} />
        <Rows rows={[["circle", "v"], ["rect", "v"], ["star"]]} />
        <Rows rows={[["plus", "v"]]} />
      </Group>
      <Group label="Manipulate" className="w-[182px]">
        <Big art={art.move} lines={["Move"]} className="ml-[2px] w-[42px]" />
        <Big art={art.copy} lines={["Copy"]} className="-ml-[1px] w-[36px]" />
        <Big art={art.rotate} lines={["Rotate"]} className="w-[42px]" />
        <Rows rows={[["stretch"], ["mirror"], ["wave"]]} />
        <Rows rows={[["array"], ["scale"], ["align", "v"]]} />
      </Group>
      <Group label="Modify" className="w-[195px]">
        <Big art={art.modify} lines={["Modify", "Solid"]} className="w-[52px]" />
        <Big art={art.features} lines={["Features"]} drop className="w-[47px]" />
        <Big art={art.boolean} lines={["Boolean", "Tools"]} drop className="w-[57px]" />
        <Rows className="-ml-[1px]" rows={[["hashBlack", "v"], ["palette", "v"], ["redX"]]} />
      </Group>
      <Group label="Groups" className="w-[109px] [&>div:nth-child(2)]:pr-[15px]">
        <Big art={art.region} lines={["Create", "Region"]} className="ml-[1px] w-[46px]" />
        <Rows className="-ml-[1px]" rows={[["chain"], ["chain2"], ["target"]]} />
        <Rows className="ml-[1px]" rows={[["pattern", "v"], ["hash", "v"], ["bulbHash", "v"]]} />
        <Icon n="launcher" s={13} className="absolute right-[3px] bottom-[1px]" />
      </Group>
    </div>
  );
}

const viewTools = ["attrs", "v", "style", "sun", "v", "|", "brush", "zoomIn", "zoomOut", "zoomWin", "fit", "rotate", "hand", "|", "feet", "fly", "navi", "prev", "next", "|", "copyView", "camera", "monitor", "zDown", "monitorQ", "zQ", "viewCircle", "cube", "clip", "clipMask"];

function Check({ on, off, className = "" }: { on?: boolean; off?: boolean; className?: string }) {
  return (
    <span className={`flex size-[13px] shrink-0 items-center justify-center rounded-[3px] border ${on ? "border-[#0a62b5] bg-[#0a62b5]" : off ? "border-[#c4c4c4] bg-[#f6f6f6]" : "border-[#5f5f5f] bg-[#f5f5f5]"} ${className}`}>
      {on ? <svg width={9} height={9} viewBox="0 0 9 9" fill="none" stroke="#fff"><path d="M1 5l2.500 2.500L8 2" /></svg> : null}
    </span>
  );
}

const Key = ({ t, at = 0 }: { t: string; at?: number }) => (
  <span className="whitespace-nowrap">{t.slice(0, at)}<u className="underline-offset-2">{t[at]}</u>{t.slice(at + 1)}</span>
);

function SectionDialog() {
  return (
    <div className="absolute top-[114px] left-[81px] h-[365px] w-[420px] overflow-hidden rounded-[8px] bg-[#f0f0f0] tracking-[0.05px]">
      <div className="flex h-[30px] items-center gap-[5px] bg-white pl-[8px] text-[12.500px] text-[#8b8b8b]"><Icon n="logo" />Section Generation</div>
      <div className="flex h-[22px] items-center gap-[17px] border-b border-[#a0a0a0] pt-[2px] pl-[14px] tracking-[0.15px]"><Key t="File" /><Key t="Tools" /></div>
      <div className="mt-[13px] flex h-[21px] items-center">
        <span className="w-[83px] text-right"><Key t="Output File:" /></span>
        <span className="ml-[9px] h-[21px] w-[300px] border border-[#a4a6ab] bg-[#f0f0f0] pl-[5px] leading-[19px] tracking-[0.2px]">C:\Users\qin-d\Documents\</span>
      </div>
      <div className="mt-[4px] flex h-[21px] items-center">
        <span className="w-[83px] text-right"><Key t="Tolerance:" /></span>
        <span className="ml-[9px] h-[21px] w-[153px] border border-[#a4a6ab] bg-white pl-[5px] leading-[19px]">0.000</span>
      </div>
      <div className="mt-[1px] pl-[95px]">
        <div className="flex h-[23px] items-center gap-[9px]"><Check /><Key t="Interactive Positioning" /></div>
        <div className="flex h-[23px] items-center gap-[9px] text-[#808080]"><Check off /><Key t="Flatten Section" at={6} /></div>
        <div className="flex h-[23px] items-center gap-[9px] text-[#808080]"><Check off /><Key t="Apply Active Scale and Angle" /></div>
        <div className="flex h-[23px] items-center gap-[9px] text-[#808080]"><Check off /><Key t="Rotate Planar Section to View" /></div>
        <div className="flex h-[23px] items-center gap-[9px]"><Check on /><Key t="Assemble Segments" /></div>
      </div>
      <div className="mt-[7px] flex h-[18px] items-center gap-[8px] pl-[13px]">Overrides<i className="h-px flex-1 bg-[#a0a0a0]" /></div>
      <div className="mt-[2px]">
        {["Level:", "Color:", "Style:", "Weight:"].map((l, i) => (
          <div key={l} className="flex h-[25px] items-center">
            <Check on={i === 1 || i === 2} className="ml-[16px]" />
            <span className="w-[54px] text-right"><Key t={l} /></span>
            <span className={`ml-[9px] flex h-[21px] w-[152px] items-center rounded-[3px] border pr-[5px] pl-[2px] ${i === 1 ? "border-[#0a62b5] bg-[#f7faff]" : "border-[#c0c0c0] bg-[#fafafa]"}`}>
              {i === 0 ? <span className="text-[#777]">3-断面-高程</span> : null}
              {i === 2 ? <><i className="h-px w-[46px] bg-black" /><span className="ml-[7px]">0</span></> : null}
              <span className="ml-auto"><Tri className={i === 0 ? "text-[#777]" : "text-black"} w={8} /></span>
            </span>
          </div>
        ))}
      </div>
    </div>
  );
}

const tree: [string, string, string, string][] = [
  ["Documents", "v", "folder", "pl-[15px]"],
  ["3ds Max 2022", ">", "folder", "pl-[23px]"],
  ["Bentley", ">", "folder", "pl-[23px]"],
  ["Luxology History", "", "folder", "pl-[23px]"],
  ["FoundryAnalytics", "", "folder", "pl-[15px]"],
  ["Huawei Cloud", ">", "folder", "pl-[15px]"],
  ["MicrosoftEdgeBackups", ">", "dim", "pl-[15px]"],
  ["OneDrive", ">", "cloud", "pl-[15px]"],
  ["OneDrive", ">", "folder", "pl-[15px]"],
];

const files = [
  ["80", "17:03", "47"], ["82", "17:03", "47"], ["84", "17:03", "46"], ["86", "15:50", "37"], ["88", "15:50", "37"],
  ["90", "15:50", "37"], ["92", "15:50", "37"], ["94", "15:50", "37"], ["96", "15:50", "37"],
];

function FileDialog() {
  return (
    <div className="absolute top-[57px] left-[335px] flex h-[517px] w-[971px] flex-col overflow-hidden rounded-[8px] rounded-bl-none border border-[#3a3a3a] bg-[#191919] tracking-[0.15px] text-[#f2f2f2]">
      <div className="flex h-[30px] shrink-0 items-center bg-black pr-[9px] pl-[8px]">
        <Icon n="logo" /><span className="ml-[5px] flex-1">Open Section Output File</span>
        <svg width={11} height={11} viewBox="0 0 11 11" stroke="#eee" className="-mt-[2px]"><path d="M.5.5l10 10M10.500.5l-10 10" /></svg>
      </div>
      <div className="flex h-[55px] shrink-0 items-center pl-[14px]">
        <svg width={14} height={12} viewBox="0 0 14 12" fill="none" stroke="#aaa" strokeWidth="1.300"><path d="M13 6H1M6 1L1 6l5 5" /></svg>
        <svg width={14} height={12} viewBox="0 0 14 12" fill="none" stroke="#aaa" strokeWidth="1.300" className="ml-[21px]"><path d="M1 6h12M8 1l5 5-5 5" /></svg>
        <Chev className="ml-[19px] text-[#aaa]" />
        <svg width={12} height={13} viewBox="0 0 12 13" fill="none" stroke="#eee" strokeWidth="1.300" className="ml-[18px]"><path d="M6 13V1M1 6l5-5 5 5" /></svg>
        <div className="ml-[15px] flex h-[35px] w-[606px] items-center border border-[#535353] pl-[7px]">
          <Icon n="folder" s={17} />
          <svg width={6} height={8} viewBox="0 0 6 8" fill="none" stroke="#fff" strokeWidth="1.400" className="mr-[10px] ml-[7px]"><path d="M1 1l3 3-3 3" /></svg>
          <span className="w-[66px]">Dong Qin</span>
          <svg width={6} height={8} viewBox="0 0 6 8" fill="none" stroke="#fff" strokeWidth="1.400" className="mr-[9px]"><path d="M1 1l3 3-3 3" /></svg>
          <span className="w-[76px]">Documents</span>
          <svg width={6} height={8} viewBox="0 0 6 8" fill="none" stroke="#fff" strokeWidth="1.400"><path d="M1 1l3 3-3 3" /></svg>
          <Chev className="mt-[3px] ml-auto" />
          <svg width={14} height={14} viewBox="0 0 14 14" fill="none" stroke="#ddd" strokeWidth="1.300" className="mt-[3px] mr-[12px] ml-[26px]"><path d="M12.500 7A5.500 5.500 0 1 1 10 2.500M10.500 0v3.500H7" /></svg>
        </div>
        <div className="ml-[12px] flex h-[35px] w-[202px] items-center border border-[#535353] pl-[14px] text-[#7b7b7b]">
          <svg width={13} height={13} viewBox="0 0 13 13" fill="none" stroke="#888"><circle cx="8" cy="5" r="4.200" /><path d="M5 8l-4 4.500" /></svg>
          <span className="ml-[13px]">搜索"Documents"</span>
        </div>
      </div>
      <div className="flex h-[32px] shrink-0 items-center border-b border-[#2b2b2b] bg-[#202020] pt-px pl-[18px]">
        <span>组织</span><Tri className="ml-[4px] text-[#bbb]" w={8} /><span className="ml-[30px] flex-1">新建文件夹</span>
        <svg width={16} height={16} viewBox="0 0 16 16" stroke="#222" strokeWidth="1.200"><rect width="16" height="16" rx="1.500" fill="#bbb" stroke="none" /><path d="M2 3.500h12M2 6.500h12M2 9.500h12M2 12.500h12" /></svg>
        <Tri className="ml-[9px] text-[#ccc]" w={8} />
        <svg width={16} height={12} viewBox="0 0 16 12" className="ml-[22px]"><path d="M0 0h16v12H0z" fill="#8ba0b3" /><path d="M1 2h8v9H1z" fill="#fff" /><path d="M9 2h6v9H9z" fill="#2b8ee0" /><path d="M5 2v9" stroke="#99a" /></svg>
        <span className="mr-[15px] ml-[20px] flex size-[16px] items-center justify-center rounded-full bg-[#0a80dc] text-[11px] font-bold text-white">?</span>
      </div>
      <div className="flex h-[287px] shrink-0 overflow-hidden">
        <div className="w-[247px] shrink-0 overflow-hidden pt-[3px]">
          {tree.map(([t, c, ic, pad], i) => (
            <div key={i} className="flex h-[32px] items-center pl-[1px]">
              <div className={`flex h-[28px] w-[237px] items-center ${pad} ${i === 0 ? "bg-[#333]" : ""}`}>
                {c ? <Chev d={c === "v" ? "M1 3l4 4 4-4" : "M3 1l4 4-4 4"} className="text-[#999]" /> : <i className="w-[10px]" />}
                <Icon n={ic === "dim" ? "folder" : ic} s={16} className={`mr-[5px] ml-[12px] ${ic === "dim" ? "opacity-50" : ""}`} />
                {t}
              </div>
            </div>
          ))}
        </div>
        <div className="mt-[171px] h-[20px] w-[2px] bg-[#9c9c9c]" />
        <div className="ml-[8px] w-[2px] bg-[#2a2a2a]" />
        <div className="w-[709px]">
          <div className="relative flex h-[27px] text-[#ddd]">
            <Chev d="M1 7l4-4 4 4" className="absolute -top-[2px] left-[143px]" />
            <span className="h-full w-[272px] border-r border-[#6a6a6a] pl-[30px] leading-[30px]">名称</span>
            <span className="h-full w-[144px] border-r border-[#6a6a6a] pl-[6px] leading-[30px]">修改日期</span>
            <span className="h-full w-[120px] border-r border-[#6a6a6a] pl-[6px] leading-[30px]">类型</span>
            <span className="h-full w-[80px] border-r border-[#6a6a6a] pl-[6px] leading-[30px]">大小</span>
          </div>
          <div className="flex">
            <div className="h-[259px] w-[615px] overflow-hidden pl-[14px]">
              <div className="-mt-[20px]">
                {files.map(([n, time, kb]) => (
                  <div key={n} className="flex h-[31px] items-center">
                    <div className={`flex h-[26px] w-[597px] items-center border pl-[3px] ${n === "86" ? "border-[#8a8a8a] bg-[#777]" : "border-transparent"}`}>
                      <Icon n="dgn" />
                      <span className="ml-[4px] w-[240px]">下库-垫层料-高程-{n}.dgn</span>
                      <span className="w-[144px] tracking-[0.2px] text-[#dcdcdc]">2022-03-08 {time}</span>
                      <span className="w-[120px] text-[#dcdcdc]">DGN File</span>
                      <span className="w-[66px] text-right text-[#dcdcdc]">{kb} KB</span>
                    </div>
                  </div>
                ))}
              </div>
            </div>
            <div className="mt-[111px] ml-[84px] h-[31px] w-[2px] bg-[#9c9c9c]" />
          </div>
        </div>
      </div>
      <div className="relative flex-1 bg-[#383838]">
        <div className="flex h-[31px] items-center pl-[183px]">
          <span className="w-[38px]">File</span><Tri w={8} className="text-[#ddd]" />
          <span className="ml-[179px] w-[71px]">Directory</span><Tri w={8} className="text-[#ddd]" />
        </div>
        <div className="mt-[11px] flex h-[26px] items-center">
          <span className="w-[188px] text-right">文件名(N):</span>
          <span className="ml-[4px] flex h-[26px] w-[561px] items-center justify-between border border-[#9a9a9a] pr-[3px] pl-[3px]">下库-垫层料-高程-86.dgn<Chev className="text-[#bbb]" /></span>
          <span className="ml-[12px] flex h-[25px] w-[188px] items-center justify-between border border-[#9a9a9a] pr-[3px] pl-[3px]">
            <span className="w-[164px] overflow-hidden whitespace-nowrap">MicroStation DGN Files (*.dgn)</span><Chev className="text-[#bbb]" />
          </span>
        </div>
        <div className="mt-[6px] flex gap-[14px] pl-[765px] text-center leading-[21px]">
          <span className="h-[24px] w-[86px] rounded-[4px] border border-[#eee]">打开(O)</span>
          <span className="h-[24px] w-[86px] rounded-[4px] border border-[#9a9a9a]">取消</span>
        </div>
        <svg width={8} height={8} viewBox="0 0 8 8" fill="#bbb" className="absolute right-[3px] bottom-[2px]"><path d="M6 0h2v2H6zM3 3h2v2H3zM6 3h2v2H6zM0 6h2v2H0zM3 6h2v2H3zM6 6h2v2H6z" /></svg>
      </div>
    </div>
  );
}

function ViewWindow() {
  return (
    <div className="relative flex w-[1621px] shrink-0 flex-col bg-black">
      <div className="flex h-[30px] shrink-0 items-center bg-linear-to-b from-[#98b4d1] to-[#b9d1ea] pl-[2px]">
        <Icon n="viewCube" s={15} />
        <span className="mt-[7px] ml-[9px] flex-1 text-[12.500px] tracking-[0.15px]">View 1 - Top, 3D Metric Design</span>
        <div className="mt-[5px] mr-[2px] flex gap-[2px]">
          <span className="flex h-[18px] w-[32px] items-center justify-center rounded-[2px] border border-[#56687c] bg-linear-to-b from-[#d2deea] to-[#a3bad2]"><i className="h-[5px] w-[9px] border border-[#444] bg-white" /></span>
          <span className="flex h-[18px] w-[32px] items-center justify-center rounded-[2px] border border-[#56687c] bg-linear-to-b from-[#d2deea] to-[#a3bad2]"><svg width={12} height={12} viewBox="0 0 12 12" fill="#fff" stroke="#444"><path d="M4.500.5h7v7h-7zM.5 4.500h7v7h-7zM3 7h2v2H3z" /></svg></span>
          <span className="flex h-[18px] w-[32px] items-center justify-center rounded-[2px] border border-[#5a1e18] bg-linear-to-b from-[#e2a093] via-[#c5503a] to-[#c8452c]"><svg width={11} height={9} viewBox="0 0 11 9"><path d="M1 .5h3L5.500 3 7 .5h3L7.500 4.500 10 8.500H7L5.500 6 4 8.500H1l2.500-4z" fill="#fff" stroke="#444" strokeWidth=".8" /></svg></span>
        </div>
      </div>
      <div className="flex h-[22px] shrink-0 items-center bg-[#f0f0f0] pl-[1px]">
        {viewTools.map((n, i) =>
          n === "|" ? <span key={i} className="mr-[5px] h-[20px] w-px bg-[#888]" />
            : n === "v" ? <span key={i} className="flex w-[16px] justify-center"><Tri className="text-black" w={8} /></span>
              : <span key={i} className="flex w-[20px] justify-center"><Icon n={n} /></span>
        )}
      </div>
      <svg width={320} height={80} viewBox="0 0 320 80" fill="none" className="absolute top-[566px] left-[789px]">
        <circle cx="246" cy="4" r="10" fill="#555" stroke="#aaa" />
        <path d="M262 0h30v13h-30z" fill="#444" stroke="#888" strokeDasharray="3 1" />
        <path d="M308 7l-16 12-6 4 4-8z" fill="#555" stroke="#888" />
        <path d="M296.500 8v67" stroke="#d8d8d8" />
        <path d="M14 8h4M50 13l6 1M66 12l6 1-3 4-4-2zM78 12h5" stroke="#aaa" strokeWidth="1.500" />
      </svg>
      <SectionDialog />
      <FileDialog />
    </div>
  );
}

const refs = ["..\\下水库大坝模型-趾板-混凝土.dgn", "...\\下水库大坝模型-面板(顶、底、料界...", "..\\下水库大坝模型-趾板-建基面.dgn", "..\\下水库大坝模型-增模区.dgn", "...\\地形-开挖-趾板开挖后收方地形-..."];

const levels = [
  "0-M-垫-100-115", "0-M-垫-115-130", "0-垫层料-设计水平剖面", "0-水平剖面-53_5", "0-水平剖面-54_333", "0-水平剖面-100-", "0-水平剖面-100+",
  "0-水平剖面-115_17-", "0-水平剖面-115_17+", "0-水平剖面-130_5", "3-断面-高程", "A-垫层料", "A-过渡料", "A-特殊垫层料", "A-文字", "A-虚线", "A-增模区",
  "A-中粗线", "BGDIM", "PDF_Geometry", "PDF_Solid Fills", "PDF_Text", "Default", "0-默认", "1-设计-混凝土", "1-设计-开挖线", "1-设计-土石界", "1-设计-支护", "1-设计-轴线",
];

function LevelPanel() {
  return (
    <div className="-mt-px flex flex-1 flex-col border-r-2 border-l-[6px] border-r-[#1c78c4] border-l-[#929ba5] bg-[#f0f0f0] pr-px tracking-[0.1px]">
      <div className="flex h-[19px] shrink-0 items-center bg-[#c0c0c0] pr-[4px] pl-[2px]">
        <span className="flex-1">Level Display - View 1</span>
        <Tri className="text-black" w={9} />
        <svg width={8} height={12} viewBox="0 0 8 12" fill="none" stroke="#000" className="mx-[8px]"><path d="M2 .5h4v6H2zM5 1v5M0 7h8M4 7v5" /></svg>
        <svg width={10} height={9} viewBox="0 0 10 9" stroke="#000" strokeWidth="2"><path d="M1 0l8 9M9 0L1 9" /></svg>
      </div>
      <div className="mt-[5px] flex h-[21px] shrink-0 items-center pl-[8px]">
        <Icon n="stack" /><Icon n="viewStar" className="mr-[8px] ml-[9px]" />
        <div className="flex h-[21px] w-[202px] items-center justify-between rounded-[3px] border border-[#c4c4c4] bg-[#fbfbfb] pr-[5px] pl-[4px]">View Display<Tri className="text-black" w={8} /></div>
      </div>
      <div className="mt-[5px] flex h-[21px] shrink-0 items-center pl-[8px]">
        <Icon n="grayLayers" s={15} />
        <span className="ml-[8px] flex size-[20px] items-center justify-center border border-[#3a6fb0] bg-[#76b0e2]"><Icon n="treeIcon" s={15} /></span>
        <Icon n="funnel" className="mr-[2px] ml-[7px]" />
        <span className="w-[40px]">(none)</span><Tri className="text-black" w={8} />
        <div className="ml-[10px] flex h-[21px] w-[67px] items-center justify-between rounded-[3px] border border-[#c4c4c4] bg-[#fbfbfb] pr-[5px] pl-[4px]">Levels<Tri className="text-black" w={8} /></div>
        <Icon n="picture" className="mr-[9px] ml-[8px]" /><Tri className="text-black" w={8} />
      </div>
      <div className="mt-[5px] ml-[1px] flex h-[206px] shrink-0 flex-col border border-[#7f8792] bg-white pt-[3px]">
        <div className="flex h-[20px] items-center pl-[8px]">
          <span className="mr-[5px] flex size-[9px] items-center justify-center border border-[#888]"><i className="h-px w-[5px] bg-[#225]" /></span>
          <Icon n="v8blue" s={15} /><span className="ml-[2px] h-[19px] border border-[#8fd4f5] bg-[#e0f3fc] px-px leading-[17px] tracking-[0.15px] whitespace-nowrap">下水库大坝模型-垫层料.dgn</span>
        </div>
        <div className="ml-[32px] tracking-[0.15px]">
          {refs.map((r, i) => (
            <div key={r} className="flex h-[20px] items-center">
              <span className={`relative w-[10px] border-l border-[#888] ${i === 4 ? "h-[10px] self-start border-b" : "h-full"}`}>{i < 4 ? <i className="absolute top-[9px] left-0 h-px w-[10px] bg-[#888]" /> : null}</span>
              <Icon n="v8dark" s={15} /><span className="ml-[4px] whitespace-nowrap">{r}</span>
            </div>
          ))}
        </div>
        <div className="mx-px mt-auto mb-px h-[16px] bg-[#f0f0f0] pt-[7px]"><div className="ml-[17px] h-px w-[173px] bg-[#888]" /></div>
      </div>
      <div className="flex h-[9px] shrink-0 items-center justify-center gap-[2px]">
        {[0, 1, 2, 3, 4, 5, 6, 7, 8].map((i) => <i key={i} className="size-[2px] bg-[#999]" />)}
      </div>
      <div className="ml-[1px] flex h-[579px] shrink-0 border border-[#7f8792] bg-white">
        <div className="w-[268px] pl-[2px]">
          <div className="flex h-[26px] pt-[2px]">
            <span className="h-[19px] w-[192px] border-r border-[#dcdcdc] pl-[5px] leading-[20px]">Name</span>
            <span className="flex h-[19px] w-[75px] border-r border-[#dcdcdc] pl-[15px] leading-[20px]">Used<Chev className="-mt-[1px] ml-[12px] scale-75 text-[#888]" /></span>
          </div>
          {levels.map((l, i) => (
            <div key={l} className={`flex h-[19px] items-center justify-between pr-[35px] pl-[4px] ${i < 22 ? "font-bold tracking-[0.35px]" : ""} ${i === 0 ? "bg-[#0078d7] text-white" : i === 10 ? "bg-[#028080] text-white" : "text-[#0f78d2]"}`}>
              <span className="whitespace-nowrap">{l}</span>
              {i < 22 ? <i className={`size-[5px] rounded-full ${i === 0 || i === 10 ? "bg-white" : "bg-black"}`} /> : null}
            </div>
          ))}
        </div>
        <div className="ml-auto w-[17px] border border-[#e0e0e0] bg-[#f0f0f0] pt-[17px]"><div className="ml-[7px] h-[269px] w-px bg-[#808080]" /></div>
      </div>
    </div>
  );
}

const Grip = ({ className = "" }: { className?: string }) => <i className={`w-0 border-l-2 border-dotted border-[#999] ${className}`} />;

function BottomBar() {
  return (
    <div className="relative flex h-[63px] shrink-0 flex-col border-b-2 border-[#222] bg-[#d6d6d6] tracking-[0.1px]">
      <div className="flex h-[29px] shrink-0 gap-[3px]">
        <div className="flex w-[463px] items-center bg-[#f0f0f0] pl-[2px]">
          <Grip className="h-[17px]" />
          <Icon n="backGreen" className="ml-[6px]" /><Tri className="ml-[6px] text-black" w={7} />
          <Icon n="fwdGray" className="ml-[6px]" /><Tri className="ml-[6px] text-[#777]" w={7} />
          <Icon n="disk" className="ml-[7px]" /><Tri className="ml-[5px] text-black" w={7} />
          <div className="ml-[5px] flex h-[22px] w-[168px] items-center rounded-[3px] border border-[#c4c4c4] bg-[#fbfbfb] pr-[5px] pl-[1px]"><Icon n="views" /><span className="ml-[5px] flex-1 tracking-[0.15px]">3D Metric Design</span><Tri className="text-black" w={8} /></div>
          <i className="ml-[3px] h-[22px] w-px bg-[#aaa]" /><Icon n="cascade" className="ml-[5px]" /><i className="mr-[3px] ml-[3px] h-[22px] w-px bg-[#aaa]" />
          {[1, 2, 3, 4, 5, 6, 7, 8].map((n) => (
            <span key={n} className={`h-[23px] w-[18px] text-center ${n === 1 ? "border border-[#3a6fb0] bg-[#76b0e2] leading-[21px]" : "border-l border-[#222] leading-[23px]"}`}>{n}</span>
          ))}
        </div>
        <div className="flex w-[29px] items-center bg-[#f0f0f0] pl-[2px]"><Grip className="h-[12px]" /><Icon n="noSnap" s={15} className="ml-[6px]" /></div>
        <div className="flex w-[442px] items-center bg-[#f0f0f0] pl-[2px]">
          <Grip className="h-[12px]" />
          <b className="ml-[5px] w-[16px] text-[16px]">X</b><span className="mt-[3px] h-[21px] w-[119px] border border-[#a4a6ab] bg-white pl-[5px] leading-[19px] text-[#777]">361577.227</span>
          <i className="mr-[6px] ml-[5px] h-[25px] w-px bg-[#aaa]" />
          <b className="w-[17px] text-[16px]">Y</b><span className="mt-[3px] h-[21px] w-[119px] border border-[#a4a6ab] bg-white pl-[5px] leading-[19px] text-[#777]">3254954.459</span>
          <i className="mr-[6px] ml-[4px] h-[25px] w-px bg-[#aaa]" />
          <b className="w-[17px] text-[16px]">Z</b><span className="mt-[3px] h-[21px] w-[119px] border border-[#a4a6ab] bg-white pl-[5px] leading-[19px] text-[#777]">189.931</span>
        </div>
      </div>
      <div className="flex h-[32px] items-center bg-[#f0f0f0] pt-[2px] tracking-[0.2px] whitespace-nowrap">
        <span className="w-[567px] pl-[3px]">Element Selection &gt; Identify element to add to set</span>
        <Grip className="mx-[3px] h-[24px]" /><i className="h-[30px] w-px bg-[#aaa]" />
        <Icon n="info" className="ml-[8px]" /><i className="mr-[2px] ml-[7px] h-[26px] w-px bg-[#777]" />
        <span className="w-[633px]">Line String, Level: 3-断面-高程</span>
        <i className="h-[26px] w-px bg-[#777]" />
        <svg width={28} height={14} viewBox="0 0 28 14" fill="#fff" className="mt-[16px]"><path d="M6 10L20 4" stroke="#333" strokeWidth="2" /><circle cx="5" cy="10" r="3" stroke={B} strokeWidth="1.800" /><circle cx="22" cy="4" r="3" stroke={B} strokeWidth="1.800" /></svg>
        <i className="mt-[8px] ml-[16px] h-[2px] w-[12px] bg-[#333]" />
        <span className="ml-[24px] w-[134px]">断面-高程</span>
        <i className="h-[26px] w-px bg-[#777]" /><i className="ml-[132px] h-[26px] w-px bg-[#777]" />
        <span className="ml-[4px] w-[213px]">361577.227, 3254954.459, 189.931</span>
        <i className="h-[26px] w-px bg-[#777]" /><Icon n="book" className="ml-[45px]" />
      </div>
      <div className="absolute top-[3px] left-[940px] flex h-[47px] w-[400px] items-center rounded-[2px] border-b border-[#d0d0d0] bg-[#f0f0f0] pl-[15px]">
        <div className="flex h-[21px] w-[128px] items-center justify-between rounded-[3px] border border-[#b8b8b8] bg-[#fbfbfb] pr-[5px] pl-[4px]">Absolute (xy=)<Tri className="text-black" w={8} /></div>
        <div className="ml-[9px] h-[21px] w-[236px] border border-[#a4a6ab] bg-white" />
      </div>
      <div className="absolute right-[13px] bottom-[8px] text-[17px] tracking-[-0.1px] whitespace-nowrap text-[#777]/80 [text-shadow:1px_1px_0_#fff]">CSDN @测量老覃</div>
    </div>
  );
}

export default function App() {
  return (
    <div className="flex h-[1079px] w-[1920px] flex-col overflow-hidden border-l border-[#0f78d2] bg-[#f0f0f0] font-['Noto_Sans','Noto_Sans_CJK_SC',sans-serif] text-[12px] leading-[16px] tracking-[-0.2px] text-[#1a1a1a]">
      <TitleBar />
      <TabBar />
      <Ribbon />
      <div className="flex h-[869px] shrink-0">
        <ViewWindow />
        <LevelPanel />
      </div>
      <BottomBar />
    </div>
  );
}
